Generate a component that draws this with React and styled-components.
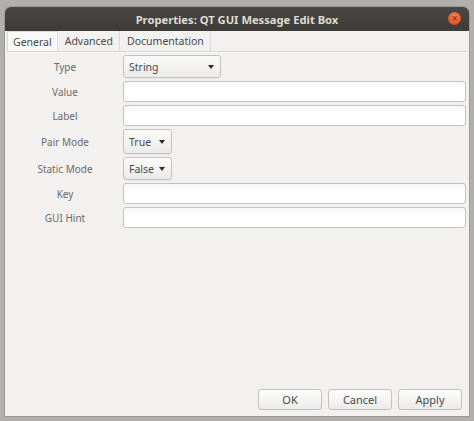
import React from 'react'
import styled, { createGlobalStyle } from 'styled-components';

const GlobalStyle = createGlobalStyle`
  html, body {
    margin: 0;
    padding: 0;
    background: #b1b0ae;
  }
  body {
    font-family: "Noto Sans", "Open Sans", "DejaVu Sans", sans-serif;
  }
`

const fields = [
    { label: 'Type', kind: 'combo', value: 'String', width: 98, height: 23 },
    { label: 'Value', kind: 'input', height: 21 },
    { label: 'Label', kind: 'input', height: 21 },
    { label: 'Pair Mode', kind: 'combo', value: 'True', width: 49, height: 25 },
    { label: 'Static Mode', kind: 'combo', value: 'False', width: 49, height: 23 },
    { label: 'Key', kind: 'input', height: 21 },
    { label: 'GUI Hint', kind: 'input', height: 21 },
]

function App() {
  return (
    <Page>
        <GlobalStyle />
        <Window>
            <TitleBar>
                <Title>Properties: QT GUI Message Edit Box</Title>
                <CloseButton>×</CloseButton>
            </TitleBar>
            <Body>
                <TabBar>
                    <Tab active>General</Tab>
                    <Tab>Advanced</Tab>
                    <Tab>Documentation</Tab>
                </TabBar>
                <Form>
                    {fields.map(f => (
                        <React.Fragment key={f.label}>
                            <FieldLabel h={f.height}>{f.label}</FieldLabel>
                            {f.kind === 'combo' ? (
                                <Combo w={f.width} h={f.height}>
                                    <span>{f.value}</span>
                                    <Arrow />
                                </Combo>
                            ) : (
                                <TextInput h={f.height} />
                            )}
                        </React.Fragment>
                    ))}
                </Form>
                <ButtonRow>
                    <Button>OK</Button>
                    <Button>Cancel</Button>
                    <Button>Apply</Button>
                </ButtonRow>
            </Body>
        </Window>
    </Page>
  )
}

export default App;

const Page = styled.div`
    width: 474px;
    height: 421px;
    box-sizing: border-box;
    padding: 7px 5px 5px 5px;
    overflow: hidden;
`
const Window = styled.div`
    width: 464px;
    height: 409px;
    display: flex;
    flex-direction: column;
    border-radius: 6px 6px 0 0;
    overflow: hidden;
    box-shadow: 0 0 0 1px #9c9b99;
`
const TitleBar = styled.div`
    position: relative;
    height: 24px;
    flex: none;
    background: linear-gradient(#4a4844, #3c3b37);
    display: flex;
    align-items: center;
    justify-content: center;
`
const Title = styled.div`
    color: #dfdbd2;
    font-size: 11.2px;
    font-weight: bold;
`
const CloseButton = styled.div`
    position: absolute;
    right: 8px;
    top: 5px;
    width: 13px;
    height: 13px;
    border-radius: 50%;
    background: radial-gradient(circle at 50% 35%, #f58a5a, #e0511d 70%, #c9431a);
    color: #8a3415;
    font-size: 10px;
    line-height: 13px;
    text-align: center;
    font-weight: bold;
`
const Body = styled.div`
    flex: 1;
    background: #f2f1f0;
    display: flex;
    flex-direction: column;
    padding: 0 2px 0 2px;
`
const TabBar = styled.div`
    display: flex;
    height: 20px;
    border-bottom: 1px solid #d8d6d3;
    box-shadow: 0 1px 0 #faf9f8;
`
const Tab = styled.div`
    display: flex;
    align-items: center;
    padding: ${props => props.active ? '0 5px' : '0 6px 0 7px'};
    font-size: 10.5px;
    color: #4a4a4a;
    background: ${props => props.active ? '#f8f8f7' : 'transparent'};
    border-right: 1px solid #dcdad6;
    border-left: ${props => props.active ? '1px solid #dcdad6' : 'none'};
    border-top: ${props => props.active ? '1px solid #dcdad6' : 'none'};
`
const Form = styled.div`
    display: grid;
    grid-template-columns: 116px 1fr;
    row-gap: 3px;
    padding: 3px 1px 0 0;
`
const FieldLabel = styled.div`
    height: ${props => props.h}px;
    display: flex;
    align-items: center;
    justify-content: center;
    font-size: 10px;
    color: #6a6a6a;
`
const Combo = styled.div`
    width: ${props => props.w}px;
    height: ${props => props.h}px;
    box-sizing: border-box;
    border: 1px solid #c4c2bf;
    border-radius: 3px;
    background: linear-gradient(#fbfbfb, #eceae8);
    display: flex;
    align-items: center;
    justify-content: space-between;
    padding: 0 6px 0 5px;
    font-size: 10.5px;
    color: #4a4a4a;
    box-shadow: 0 1px 0 rgba(0,0,0,0.04);
`
const Arrow = styled.div`
    width: 0;
    height: 0;
    border-left: 3.5px solid transparent;
    border-right: 3.5px solid transparent;
    border-top: 4px solid #2e2e2e;
`
const TextInput = styled.div`
    height: ${props => props.h}px;
    box-sizing: border-box;
    border: 1px solid #c4c2bf;
    border-radius: 3px;
    background: linear-gradient(#f6f6f6, #ffffff 40%);
`
const ButtonRow = styled.div`
    margin-top: auto;
    display: flex;
    justify-content: flex-end;
    gap: 6px;
    padding: 0 5px 6px 0;
`
const Button = styled.div`
    width: 64px;
    height: 21px;
    box-sizing: border-box;
    border: 1px solid #c4c2bf;
    border-radius: 3px;
    background: linear-gradient(#fdfdfd, #ecebe9);
    display: flex;
    align-items: center;
    justify-content: center;
    font-size: 11px;
    color: #4a4a4a;
`
